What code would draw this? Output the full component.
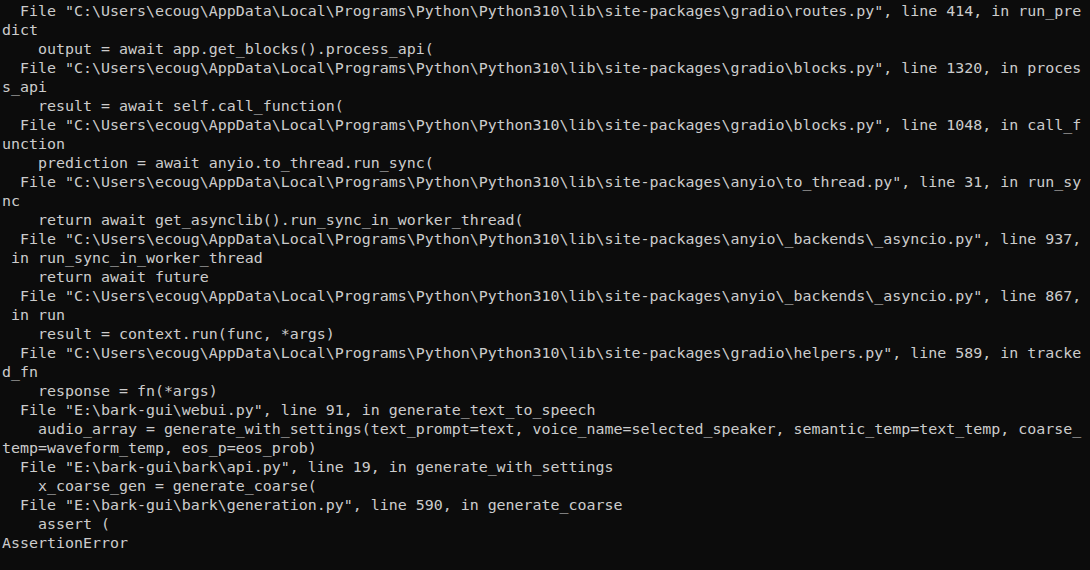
const lines = [
  '  File "C:\\Users\\ecoug\\AppData\\Local\\Programs\\Python\\Python310\\lib\\site-packages\\gradio\\routes.py", line 414, in run_pre',
  'dict',
  '    output = await app.get_blocks().process_api(',
  '  File "C:\\Users\\ecoug\\AppData\\Local\\Programs\\Python\\Python310\\lib\\site-packages\\gradio\\blocks.py", line 1320, in proces',
  's_api',
  '    result = await self.call_function(',
  '  File "C:\\Users\\ecoug\\AppData\\Local\\Programs\\Python\\Python310\\lib\\site-packages\\gradio\\blocks.py", line 1048, in call_f',
  'unction',
  '    prediction = await anyio.to_thread.run_sync(',
  '  File "C:\\Users\\ecoug\\AppData\\Local\\Programs\\Python\\Python310\\lib\\site-packages\\anyio\\to_thread.py", line 31, in run_sy',
  'nc',
  '    return await get_asynclib().run_sync_in_worker_thread(',
  '  File "C:\\Users\\ecoug\\AppData\\Local\\Programs\\Python\\Python310\\lib\\site-packages\\anyio\\_backends\\_asyncio.py", line 937,',
  ' in run_sync_in_worker_thread',
  '    return await future',
  '  File "C:\\Users\\ecoug\\AppData\\Local\\Programs\\Python\\Python310\\lib\\site-packages\\anyio\\_backends\\_asyncio.py", line 867,',
  ' in run',
  '    result = context.run(func, *args)',
  '  File "C:\\Users\\ecoug\\AppData\\Local\\Programs\\Python\\Python310\\lib\\site-packages\\gradio\\helpers.py", line 589, in tracke',
  'd_fn',
  '    response = fn(*args)',
  '  File "E:\\bark-gui\\webui.py", line 91, in generate_text_to_speech',
  '    audio_array = generate_with_settings(text_prompt=text, voice_name=selected_speaker, semantic_temp=text_temp, coarse_',
  'temp=waveform_temp, eos_p=eos_prob)',
  '  File "E:\\bark-gui\\bark\\api.py", line 19, in generate_with_settings',
  '    x_coarse_gen = generate_coarse(',
  '  File "E:\\bark-gui\\bark\\generation.py", line 590, in generate_coarse',
  '    assert (',
  'AssertionError',
];

export default function App() {
  return (
    <div className="h-[570px] w-[1090px] overflow-hidden bg-[#0c0c0c] pl-[2px] pt-[2px] font-['DejaVu_Sans_Mono',monospace] text-[14.95px] leading-[19px] text-[#cccccc]">
      {lines.map((line, i) => (
        <div key={i} className="whitespace-pre">
          {line}
        </div>
      ))}
    </div>
  );
}
